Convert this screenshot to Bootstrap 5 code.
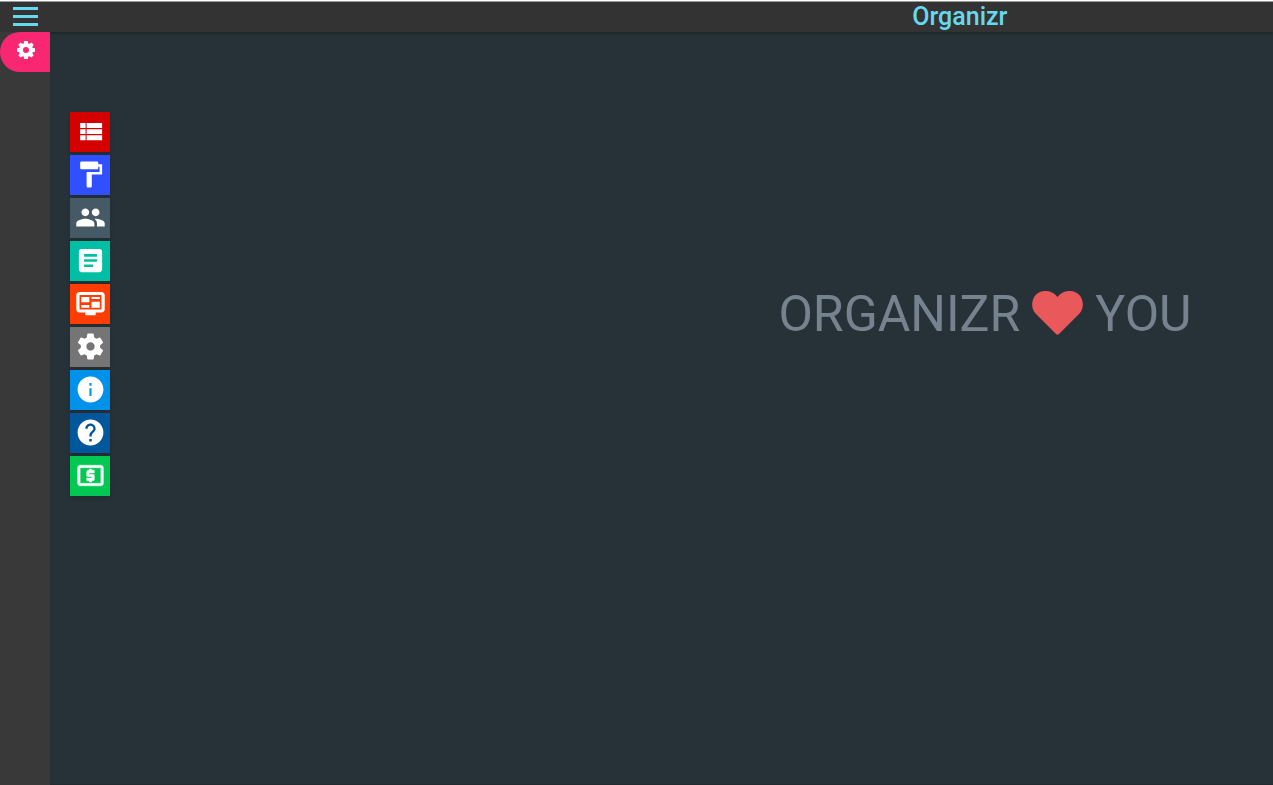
<!DOCTYPE html>
<html lang="en">
<head>
<meta charset="utf-8">
<meta name="viewport" content="width=device-width, initial-scale=1">
<title>Organizr</title>
<link href="https://cdn.jsdelivr.net/npm/bootstrap@5.3.0/dist/css/bootstrap.min.css" rel="stylesheet">
<style>
  body { font-family: Roboto, "Liberation Sans", sans-serif; background: #273238; }
  svg { display: block; fill: currentColor; }
  .topbar { height: 32px; background: #333; color: #66d9ef; border-top: 1px solid #fff; box-shadow: 0 1px 3px rgba(0,0,0,.35); z-index: 2; }
  .topbar::before { content: ""; position: absolute; inset: 0 0 auto; height: 1px; background: #999; }
  .menu-btn { width: 50px; color: #66d9ef; border: 0; background: none; }
  .brand { width: 49.2%; font-size: 25px; line-height: 32px; font-weight: 500; }
  .rail { width: 50px; background: #393939; z-index: 3; }
  .rail-tab { width: 50px; height: 40px; background: #f92671; border-radius: 20px 0 0 20px; padding: 0 0 4px 2px; }
  .stage { border-bottom: 1px solid #222b30; }
  .tiles { width: 40px; margin: 80px 0 0 20px; gap: 3px; }
  .tile { width: 40px; height: 40px; padding: 4px 4px 5px 5px; box-shadow: 0 2px 4px rgba(0,0,0,.15); }
  .t-red { background: #d50000; } .t-blue { background: #304ffe; } .t-slate { background: #455a64; }
  .t-teal { background: #00bfa5; } .t-orange { background: #ff3d00; } .t-gray { background: #757575; }
  .t-sky { background: #0091ea; } .t-navy { background: #01579b; } .t-green { background: #00c853; }
  .welcome { width: 47.1%; margin-top: 252px; font-size: 50px; line-height: 60px; color: #76838f; gap: 12px; }
  .heart { margin-top: 7px; color: #e9595b; }
</style>
</head>
<body class="d-flex flex-column min-vh-100 overflow-x-hidden">
<header class="topbar d-flex align-items-stretch position-relative">
  <button class="menu-btn p-0 d-flex align-items-center justify-content-center" type="button" aria-label="Toggle menu">
    <svg width="25" height="19" viewBox="0 0 25 19"><path d="M0 0h25v3H0zM0 8h25v3H0zM0 16h25v3H0z"/></svg>
  </button>
  <a class="brand ms-auto text-center text-decoration-none text-reset" href="#">Organizr</a>
</header>
<div class="d-flex flex-grow-1">
  <nav class="rail flex-shrink-0 position-relative" aria-label="Tabs">
    <a class="rail-tab d-flex align-items-center justify-content-center text-white" href="#" aria-label="Settings">
      <svg width="18" height="18" viewBox="0 0 18 18"><path fill-rule="evenodd" d="M7.2 0h3.6l.5 2.5 1 .4 2.2-1.4 2.2 2.2-1.4 2.2.4 1 2.3.4v3.4l-2.3.5-.4 1 1.4 2.1-2.2 2.3-2.2-1.4-1 .4-.5 2.4H7.2l-.5-2.4-1-.4-2.2 1.4-2.2-2.3 1.4-2.1-.4-1L0 10.700V7.300l2.300-.4.4-1-1.400-2.200 2.200-2.200 2.200 1.400 1-.4zM9 6a3 3 0 1 0 0 6 3 3 0 0 0 0-6z"/></svg>
    </a>
  </nav>
  <main class="stage flex-grow-1 d-flex align-items-start">
    <nav class="tiles d-flex flex-column text-white" aria-label="Settings sections">
      <button class="tile t-red btn rounded-0 border-0 text-white" type="button" aria-label="Tabs"><svg width="31" height="31" viewBox="0 0 24 24"><path d="M4 13.900h4.200v-3.600H4v3.600zm0 4.800h4.200v-3.800H4v3.800zM4 9.300h4.200V5.400H4v3.900zm5 4.600h12v-3.600H9v3.600zm0 4.800h12v-3.800H9v3.800zM9 5.400v3.900h12V5.400H9z"/></svg></button>
      <button class="tile t-blue btn rounded-0 border-0 text-white" type="button" aria-label="Appearance"><svg width="31" height="31" viewBox="0 0 24 24"><path d="M18 4V3c0-.55-.45-1-1-1H5c-.55 0-1 .45-1 1v4c0 .55.45 1 1 1h12c.55 0 1-.45 1-1V6h1v4H9v11c0 .55.45 1 1 1h2c.55 0 1-.45 1-1v-9h8V4h-3z"/></svg></button>
      <button class="tile t-slate btn rounded-0 border-0 text-white" type="button" aria-label="Users"><svg width="31" height="31" viewBox="0 0 24 24"><path d="M16 11c1.660 0 2.990-1.340 2.990-3S17.660 5 16 5c-1.660 0-3 1.340-3 3s1.340 3 3 3zm-8 0c1.660 0 2.990-1.340 2.990-3S9.660 5 8 5C6.340 5 5 6.340 5 8s1.340 3 3 3zm0 2c-2.330 0-7 1.170-7 3.500V19h14v-2.500c0-2.330-4.670-3.500-7-3.500zm8 0c-.29 0-.62.02-.97.05 1.160.84 1.970 1.970 1.970 3.450V19h6v-2.500c0-2.330-4.670-3.500-7-3.500z"/></svg></button>
      <button class="tile t-teal btn rounded-0 border-0 text-white" type="button" aria-label="Logs"><svg width="31" height="31" viewBox="0 0 24 24"><path d="M19 3H5c-1.100 0-2 .9-2 2v14c0 1.100.9 2 2 2h14c1.100 0 2-.9 2-2V5c0-1.100-.9-2-2-2zm-5 14H7v-2h7v2zm3-4H7v-2h10v2zm0-4H7V7h10v2z"/></svg></button>
      <button class="tile t-orange btn rounded-0 border-0 text-white" type="button" aria-label="Homepage"><svg width="31" height="31" viewBox="0 0 24 24"><path fill-rule="evenodd" d="M20.500 3h-17C2 3 1 4 1 5.500v11C1 18 2 19 3.500 19H8v2h8v-2h4.500c1.500 0 2.500-1 2.500-2.500v-11C23 4 22 3 20.500 3zm0 13.700h-17V5.400h17v11.300z"/><path d="M4.900 6.900h6.200v4.200H4.900zM12.800 6.900h6.400v1.700h-6.400zM12.800 10.700h6.400v4.500h-6.400zM4.900 13.100h6.200v2.100H4.900z"/></svg></button>
      <button class="tile t-gray btn rounded-0 border-0 text-white" type="button" aria-label="Advanced"><svg width="31" height="31" viewBox="0 0 24 24"><path d="M19.430 12.980c.04-.32.07-.64.07-.98s-.03-.66-.07-.98l2.110-1.650c.19-.15.24-.42.12-.64l-2-3.460c-.12-.22-.39-.3-.61-.22l-2.490 1c-.52-.4-1.080-.73-1.690-.98l-.38-2.650C14.460 2.180 14.250 2 14 2h-4c-.25 0-.46.18-.49.42l-.38 2.650c-.61.25-1.170.59-1.690.98l-2.490-1c-.23-.09-.49 0-.61.22l-2 3.460c-.13.22-.07.49.12.64l2.110 1.650c-.04.32-.07.65-.07.98s.03.66.07.98l-2.110 1.650c-.19.15-.24.42-.12.64l2 3.460c.12.22.39.3.61.22l2.490-1c.52.4 1.080.73 1.690.98l.38 2.650c.03.24.24.42.49.42h4c.25 0 .46-.18.49-.42l.38-2.650c.61-.25 1.170-.59 1.690-.98l2.490 1c.23.09.49 0 .61-.22l2-3.460c.12-.22.07-.49-.12-.64l-2.110-1.650zM12 15.200c-1.800 0-3.200-1.400-3.200-3.200s1.400-3.200 3.200-3.200 3.200 1.400 3.200 3.200-1.400 3.200-3.200 3.200z"/></svg></button>
      <button class="tile t-sky btn rounded-0 border-0 text-white" type="button" aria-label="About"><svg width="31" height="31" viewBox="0 0 24 24"><path d="M12 2C6.480 2 2 6.480 2 12s4.480 10 10 10 10-4.480 10-10S17.520 2 12 2zm.8 15h-1.600v-6h1.600v6zm0-8h-1.600V7h1.600v2z"/></svg></button>
      <button class="tile t-navy btn rounded-0 border-0 text-white" type="button" aria-label="Help"><svg width="31" height="31" viewBox="0 0 24 24"><path d="M12 2C6.480 2 2 6.480 2 12s4.480 10 10 10 10-4.480 10-10S17.520 2 12 2zm1 16.900h-2v-1.900h2v1.900zm2.070-7.650l-.9.920C13.350 13 12.900 13.600 12.900 15h-1.800v-.5c0-1.100.45-2.100 1.170-2.830l1.340-1.360c.37-.36.59-.86.59-1.410 0-1.200-1-2.100-2.200-2.100s-2.200.9-2.200 2.200H8c0-2.300 1.790-4 4-4s4 1.790 4 4c0 .88-.36 1.680-.93 2.250z"/></svg></button>
      <button class="tile t-green btn rounded-0 border-0 text-white" type="button" aria-label="Donate"><svg width="31" height="31" viewBox="0 0 24 24"><path stroke="currentColor" stroke-width=".3" stroke-linejoin="round" d="M11 17h2v-1h1c.55 0 1-.45 1-1v-3c0-.55-.45-1-1-1h-3v-1h4V8h-2V7h-2v1h-1c-.55 0-1 .45-1 1v3c0 .55.45 1 1 1h3v1H9v2h2v1zm9-13H4c-1.110 0-1.990.89-1.990 2L2 18c0 1.110.89 2 2 2h16c1.110 0 2-.89 2-2V6c0-1.110-.89-2-2-2zm0 14H4V6h16v12z"/></svg></button>
    </nav>
    <h1 class="welcome fw-normal mb-0 ms-auto d-flex justify-content-center text-nowrap">
      <span>ORGANIZR</span>
      <svg class="heart" width="51" height="44" viewBox="0 0 51 44" role="img" aria-label="loves"><path d="M25.500 6C19-2.500 7-1.500 2.500 5.500-1 11-.5 18 3.500 22.500L24 43q1.500 1.500 3 0L47.500 22.500C51.500 18 52 11 48.500 5.500 44-1.500 32-2.500 25.500 6z"/></svg>
      <span>YOU</span>
    </h1>
  </main>
</div>
<script src="https://cdn.jsdelivr.net/npm/bootstrap@5.3.0/dist/js/bootstrap.bundle.min.js"></script>
</body>
</html>
